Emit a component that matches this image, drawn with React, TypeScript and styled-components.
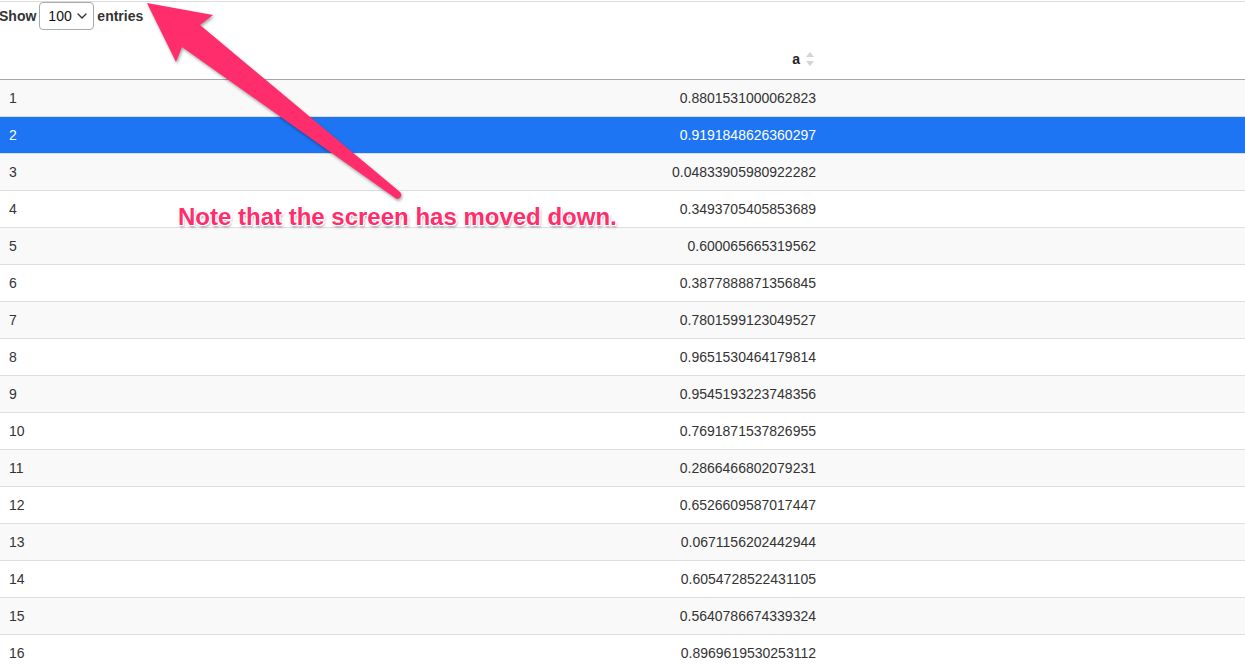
import React from "react";
import styled, { createGlobalStyle } from "styled-components";

const Global = createGlobalStyle`
  html, body { margin: 0; padding: 0; overflow: hidden; background: #fff; }
  body { font-family: "Liberation Sans", Arial, Helvetica, sans-serif; font-size: 14px; color: #333; }
`;

const Page = styled.div`
  position: relative;
  width: 1245px;
  height: 669px;
  overflow: hidden;
  padding-top: 1px;
  box-sizing: border-box;
`;

const TopRule = styled.div`
  border-top: 1px solid #dcdcdc;
`;

const Controls = styled.div`
  display: flex;
  align-items: center;
  height: 28px;
  margin-left: -1px;
  margin-bottom: 9px;
  font-weight: bold;
  color: #333;
  gap: 3px;
`;

const SelectBox = styled.div`
  display: flex;
  align-items: center;
  justify-content: space-between;
  box-sizing: border-box;
  width: 55px;
  height: 28px;
  border: 1px solid #aaa;
  border-radius: 4px;
  padding: 0 6px 0 8px;
  font-weight: normal;
  color: #111;
  background: #fff;
`;

const Table = styled.div`
  display: flex;
  flex-direction: column;
`;

const HeaderRow = styled.div`
  display: grid;
  grid-template-columns: 526px 300px 1fr;
  border-bottom: 1px solid #a6a6a6;
`;

const Th = styled.div`
  display: flex;
  align-items: center;
  justify-content: flex-end;
  padding: 10px 12px 10px 10px;
  line-height: 20px;
  font-weight: bold;
  color: #222;
  gap: 6px;
`;

const Row = styled.div<{ $striped: boolean; $selected: boolean }>`
  display: grid;
  grid-template-columns: 526px 300px 1fr;
  border-top: 1px solid #ddd;
  &:first-child { border-top: none; }
  background: ${(p) => (p.$selected ? "#1e75f4" : p.$striped ? "#f9f9f9" : "#fff")};
  color: ${(p) => (p.$selected ? "#fff" : "#333")};
`;

const Td = styled.div<{ $align?: "left" | "right" }>`
  padding: 8px 10px 8px 9px;
  line-height: 20px;
  height: 20px;
  text-align: ${(p) => p.$align || "left"};
  white-space: nowrap;
`;

const Overlay = styled.svg`
  position: absolute;
  left: 0;
  top: 0;
  pointer-events: none;
  filter: drop-shadow(1px 2px 1.5px rgba(0, 0, 0, 0.35));
`;

const Note = styled.div`
  position: absolute;
  left: 178px;
  top: 203px;
  font-family: "Liberation Sans", Arial, Helvetica, sans-serif;
  font-weight: bold;
  font-size: 24px;
  line-height: 28px;
  color: #ff2d6c;
  white-space: nowrap;
  text-shadow: 1px 1px 0 #fff, -1px -1px 0 #fff, 1px -1px 0 #fff, -1px 1px 0 #fff,
    0 1px 0 #fff, 0 -1px 0 #fff, 1px 0 0 #fff, -1px 0 0 #fff,
    1px 2px 3px rgba(0, 0, 0, 0.45);
`;

const values = [
  "0.8801531000062823",
  "0.9191848626360297",
  "0.04833905980922282",
  "0.3493705405853689",
  "0.600065665319562",
  "0.3877888871356845",
  "0.7801599123049527",
  "0.9651530464179814",
  "0.9545193223748356",
  "0.7691871537826955",
  "0.2866466802079231",
  "0.6526609587017447",
  "0.0671156202442944",
  "0.6054728522431105",
  "0.5640786674339324",
  "0.8969619530253112",
];

const SortIcon = () => (
  <svg width="8" height="14" viewBox="0 0 8 14">
    <path d="M4 0 L8 5 L0 5 Z" fill="#d4d4d4" />
    <path d="M4 14 L8 9 L0 9 Z" fill="#d4d4d4" />
  </svg>
);

const Chevron = () => (
  <svg width="10" height="6" viewBox="0 0 10 6">
    <path d="M1 1 L5 5 L9 1" fill="none" stroke="#333" strokeWidth="1.4" strokeLinecap="round" strokeLinejoin="round" />
  </svg>
);

export default function App() {
  return (
    <Page>
      <Global />
      <TopRule />
      <Controls>
        <span>Show</span>
        <SelectBox>
          <span>100</span>
          <Chevron />
        </SelectBox>
        <span>entries</span>
      </Controls>
      <Table>
        <HeaderRow>
          <Th />
          <Th>
            <span>a</span>
            <SortIcon />
          </Th>
          <Th />
        </HeaderRow>
        <div>
          {values.map((v, i) => (
            <Row key={i} $striped={i % 2 === 0} $selected={i === 1}>
              <Td>{i + 1}</Td>
              <Td $align="right">{v}</Td>
              <Td />
            </Row>
          ))}
        </div>
      </Table>
      <Overlay width="460" height="220" viewBox="0 0 460 220">
        <path
          d="M147 3 L213 15 L200 25 L400 192 A3.6 3.6 0 0 1 394.5 197.5 L182 47 L176 62 Z"
          fill="#ff2d6c"
        />
      </Overlay>
      <Note>Note that the screen has moved down.</Note>
    </Page>
  );
}
